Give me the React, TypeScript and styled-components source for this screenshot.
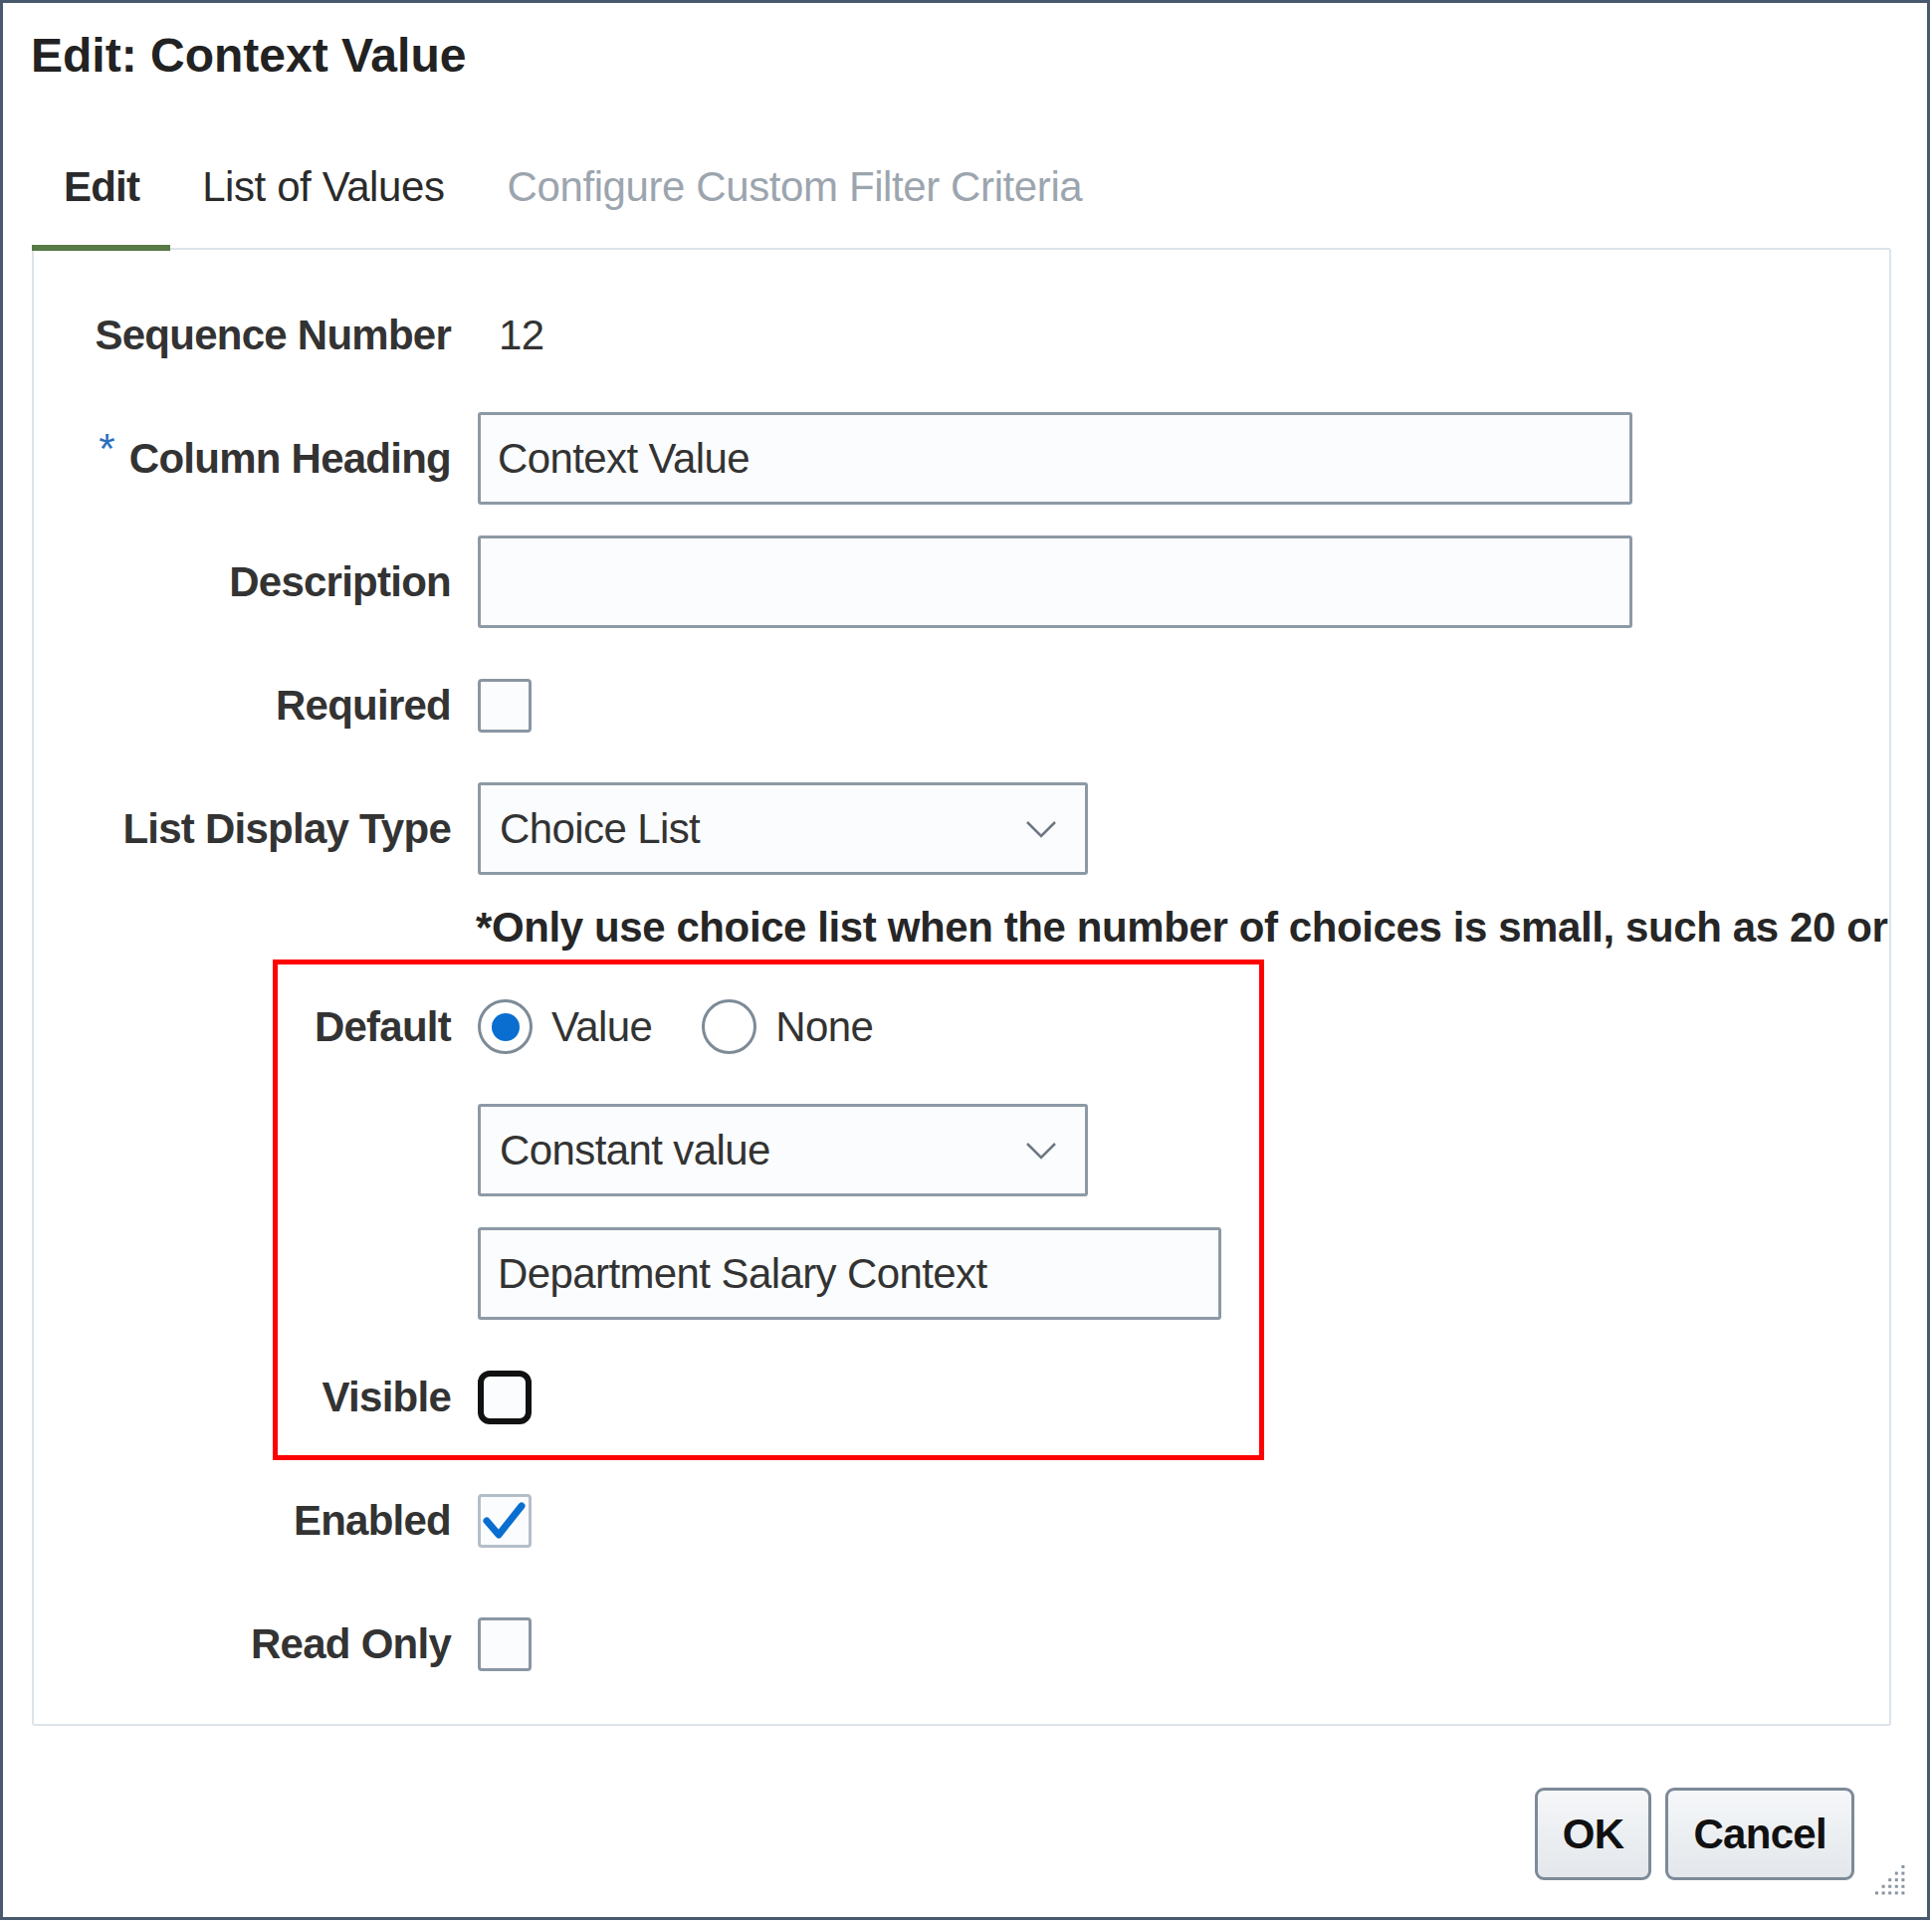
import React from "react";
import styled, { createGlobalStyle } from "styled-components";

const GlobalStyle = createGlobalStyle`
  html, body { margin: 0; padding: 0; background: #fff; }
  body { font-family: "Liberation Sans", Arial, sans-serif; color: #333; }
  * { box-sizing: border-box; }
`;

const Frame = styled.div`
  position: relative;
  width: 1939px;
  height: 1929px;
  border: 3px solid #4a5a6e;
  background: #fff;
  padding: 25px 36px 0 29px;
  display: flex;
  flex-direction: column;
`;

const Title = styled.h1`
  margin: 0 0 0 -1px;
  font-size: 48px;
  line-height: 56px;
  font-weight: 700;
  color: #222;
`;

const TabBar = styled.div`
  display: flex;
  margin-top: 61px;
  margin-bottom: -3px;
  position: relative;
  z-index: 1;
`;

type TabState = "active" | "normal" | "disabled";

const Tab = styled.div<{ $state: TabState }>`
  padding: 20px 31px 35px 32px;
  font-size: 42px;
  letter-spacing: ${(p) => (p.$state === "active" ? "-0.8px" : "-0.4px")};
  line-height: 46px;
  font-weight: ${(p) => (p.$state === "active" ? 700 : 400)};
  color: ${(p) => (p.$state === "disabled" ? "#9ca5ae" : "#2b2b2b")};
  border-bottom: 6px solid ${(p) => (p.$state === "active" ? "#577a46" : "transparent")};
`;

const Panel = styled.div`
  border: 2px solid #dde3ea;
  border-radius: 3px;
  padding: 39px 0 34px 0;
  display: flex;
  flex-direction: column;
  gap: 31px;
  overflow: hidden;
`;

const Row = styled.div<{ $compact?: boolean }>`
  display: grid;
  grid-template-columns: 419px 1fr;
  column-gap: 27px;
  align-items: center;
  min-height: ${(p) => (p.$compact ? "44px" : "93px")};
`;

const Label = styled.div`
  text-align: right;
  font-size: 42px;
  letter-spacing: -0.75px;
  line-height: 46px;
  font-weight: 700;
  color: #333;
  white-space: nowrap;
`;

const Required = styled.span`
  position: relative;
  top: -10px;
  line-height: 0;
  color: #2a6fbd;
  font-size: 42px;
  font-weight: 400;
  margin-right: 15px;
`;

const Value = styled.div`
  padding-left: 21px;
  font-size: 42px;
  letter-spacing: -0.6px;
  line-height: 46px;
  color: #333;
`;

const Field = styled.input<{ $width: number }>`
  width: ${(p) => p.$width}px;
  height: 93px;
  border: 3px solid #8d99a5;
  border-radius: 3px;
  background: #fbfcfd;
  padding: 0 17px;
  font-family: "Liberation Sans", Arial, sans-serif;
  font-size: 42px;
  letter-spacing: -0.6px;
  color: #333;
  outline: none;
`;

const Select = styled.div<{ $width: number }>`
  width: ${(p) => p.$width}px;
  height: 93px;
  border: 3px solid #8d99a5;
  border-radius: 3px;
  background: #fbfcfd;
  padding: 0 28px 0 19px;
  display: flex;
  align-items: center;
  justify-content: space-between;
  font-size: 42px;
  letter-spacing: -0.6px;
  color: #333;
`;

const Hint = styled.div`
  margin-left: -2px;
  font-size: 42px;
  letter-spacing: -0.4px;
  line-height: 44px;
  font-weight: 700;
  color: #262626;
  white-space: nowrap;
`;

type CheckVariant = "plain" | "focus" | "checked";

const Check = styled.div<{ $variant?: CheckVariant }>`
  width: 54px;
  height: 54px;
  border-radius: ${(p) => (p.$variant === "focus" ? "12px" : "4px")};
  border: ${(p) =>
    p.$variant === "focus"
      ? "6px solid #111"
      : p.$variant === "checked"
      ? "3px solid #b4bec8"
      : "3px solid #8a96a2"};
  background: #fbfcfd;
  display: flex;
  align-items: center;
  justify-content: center;
`;

const Group = styled.div`
  position: relative;
  display: flex;
  flex-direction: column;
  gap: 31px;
  &::after {
    content: "";
    position: absolute;
    top: -21px;
    bottom: -17px;
    left: 240px;
    right: 628px;
    border: 5px solid #ff0000;
    pointer-events: none;
  }
`;

const RadioSet = styled.div`
  display: flex;
  align-items: center;
`;

const Radio = styled.div<{ $on?: boolean }>`
  width: 55px;
  height: 55px;
  border-radius: 50%;
  border: 3px solid #7d8b97;
  background: #fff;
  display: flex;
  align-items: center;
  justify-content: center;
  &::after {
    content: "";
    width: 28px;
    height: 28px;
    border-radius: 50%;
    background: ${(p) => (p.$on ? "#0a6ed1" : "transparent")};
  }
`;

const RadioText = styled.span<{ $last?: boolean }>`
  margin-left: 19px;
  margin-right: ${(p) => (p.$last ? "0" : "50px")};
  font-size: 42px;
  letter-spacing: -0.6px;
  line-height: 46px;
  color: #333;
`;

const Footer = styled.div`
  display: flex;
  justify-content: flex-end;
  gap: 14px;
  margin-top: 62px;
  padding-right: 37px;
`;

const Button = styled.button`
  height: 93px;
  padding: 0 25px;
  border: 3px solid #7d8a98;
  border-radius: 9px;
  background: linear-gradient(#f5f7f9, #e3e7eb);
  font-family: "Liberation Sans", Arial, sans-serif;
  font-size: 42px;
  letter-spacing: -0.7px;
  font-weight: 700;
  color: #111;
`;

const Grip = styled.svg`
  position: absolute;
  right: 20px;
  bottom: 20px;
`;

const Chevron = () => (
  <svg width="32" height="18" viewBox="0 0 32 18">
    <polyline points="2,2 16,16 30,2" fill="none" stroke="#6c7783" strokeWidth="2.5" />
  </svg>
);

const CheckMark = () => (
  <svg width="48" height="48" viewBox="0 0 48 48">
    <polyline
      points="6,24 18,38 41,9"
      fill="none"
      stroke="#0a6ed1"
      strokeWidth="7"
      strokeLinecap="round"
      strokeLinejoin="round"
    />
  </svg>
);

const gripDots: Array<[number, number]> = [];
for (let r = 0; r < 5; r++) {
  for (let c = 4 - r; c < 5; c++) gripDots.push([c, r]);
}

export default function App() {
  return (
    <>
      <GlobalStyle />
      <Frame>
        <Title>Edit: Context Value</Title>
        <TabBar>
          <Tab $state="active">Edit</Tab>
          <Tab $state="normal">List of Values</Tab>
          <Tab $state="disabled">Configure Custom Filter Criteria</Tab>
        </TabBar>
        <Panel>
          <Row>
            <Label>Sequence Number</Label>
            <Value>12</Value>
          </Row>
          <Row>
            <Label>
              <Required>*</Required>Column Heading
            </Label>
            <Field $width={1160} readOnly defaultValue="Context Value" />
          </Row>
          <Row>
            <Label>Description</Label>
            <Field $width={1160} readOnly defaultValue="" />
          </Row>
          <Row>
            <Label>Required</Label>
            <Check />
          </Row>
          <Row>
            <Label>List Display Type</Label>
            <Select $width={613}>
              <span>Choice List</span>
              <Chevron />
            </Select>
          </Row>
          <Row $compact>
            <span />
            <Hint>*Only use choice list when the number of choices is small, such as 20 or</Hint>
          </Row>
          <Group>
            <Row>
              <Label>Default</Label>
              <RadioSet>
                <Radio $on />
                <RadioText>Value</RadioText>
                <Radio />
                <RadioText $last>None</RadioText>
              </RadioSet>
            </Row>
            <Row>
              <span />
              <Select $width={613}>
                <span>Constant value</span>
                <Chevron />
              </Select>
            </Row>
            <Row>
              <span />
              <Field $width={747} readOnly defaultValue="Department Salary Context" />
            </Row>
            <Row>
              <Label>Visible</Label>
              <Check $variant="focus" />
            </Row>
          </Group>
          <Row>
            <Label>Enabled</Label>
            <Check $variant="checked">
              <CheckMark />
            </Check>
          </Row>
          <Row>
            <Label>Read Only</Label>
            <Check />
          </Row>
        </Panel>
        <Footer>
          <Button>OK</Button>
          <Button>Cancel</Button>
        </Footer>
        <Grip width="32" height="32" viewBox="0 0 32 32">
          {gripDots.map(([c, r]) => (
            <rect key={`${c}-${r}`} x={c * 6.6} y={r * 6.6} width="3" height="3" fill="#8a949f" />
          ))}
        </Grip>
      </Frame>
    </>
  );
}
